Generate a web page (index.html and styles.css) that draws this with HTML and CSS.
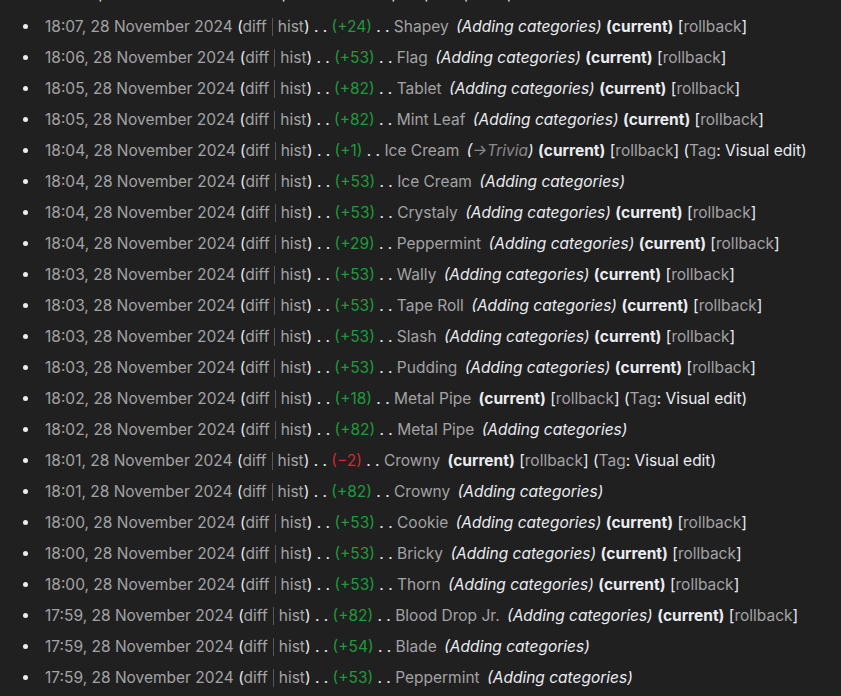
FILE: index.html
```html
<!DOCTYPE html>
<html>
<head>
<meta charset="utf-8">
<link rel="stylesheet" href="styles.css">
</head>
<body>
<div class="page">
<p class="nav">(<a>newest</a> | <a>oldest</a>) View (<a>newer 50</a> | <a>older 50</a>) (<a>20</a> | <a>50</a> | <a>100</a> | <a>250</a> | <a>500</a>)</p>
<ul class="list">
<li><a>18:07, 28 November 2024</a> <span class="lk">(<a>diff</a><span class="bar"></span><a>hist</a>)</span> <span class="sep">. .</span> <span class="pos">(+24)</span> <span class="sep">. .</span> <a class="title">Shapey</a> <i>(Adding categories)</i> <b>(current)</b> <span class="br">[<a>rollback</a>]</span></li>
<li><a>18:06, 28 November 2024</a> <span class="lk">(<a>diff</a><span class="bar"></span><a>hist</a>)</span> <span class="sep">. .</span> <span class="pos">(+53)</span> <span class="sep">. .</span> <a class="title">Flag</a> <i>(Adding categories)</i> <b>(current)</b> <span class="br">[<a>rollback</a>]</span></li>
<li><a>18:05, 28 November 2024</a> <span class="lk">(<a>diff</a><span class="bar"></span><a>hist</a>)</span> <span class="sep">. .</span> <span class="pos">(+82)</span> <span class="sep">. .</span> <a class="title">Tablet</a> <i>(Adding categories)</i> <b>(current)</b> <span class="br">[<a>rollback</a>]</span></li>
<li><a>18:05, 28 November 2024</a> <span class="lk">(<a>diff</a><span class="bar"></span><a>hist</a>)</span> <span class="sep">. .</span> <span class="pos">(+82)</span> <span class="sep">. .</span> <a class="title">Mint Leaf</a> <i>(Adding categories)</i> <b>(current)</b> <span class="br">[<a>rollback</a>]</span></li>
<li><a>18:04, 28 November 2024</a> <span class="lk">(<a>diff</a><span class="bar"></span><a>hist</a>)</span> <span class="sep">. .</span> <span class="pos">(+1)</span> <span class="sep">. .</span> <a class="title">Ice Cream</a> <i>(<a class="sec">→Trivia</a>)</i> <b>(current)</b> <span class="br">[<a>rollback</a>]</span> <span class="tag">(<a>Tag</a>: Visual edit)</span></li>
<li><a>18:04, 28 November 2024</a> <span class="lk">(<a>diff</a><span class="bar"></span><a>hist</a>)</span> <span class="sep">. .</span> <span class="pos">(+53)</span> <span class="sep">. .</span> <a class="title">Ice Cream</a> <i>(Adding categories)</i></li>
<li><a>18:04, 28 November 2024</a> <span class="lk">(<a>diff</a><span class="bar"></span><a>hist</a>)</span> <span class="sep">. .</span> <span class="pos">(+53)</span> <span class="sep">. .</span> <a class="title">Crystaly</a> <i>(Adding categories)</i> <b>(current)</b> <span class="br">[<a>rollback</a>]</span></li>
<li><a>18:04, 28 November 2024</a> <span class="lk">(<a>diff</a><span class="bar"></span><a>hist</a>)</span> <span class="sep">. .</span> <span class="pos">(+29)</span> <span class="sep">. .</span> <a class="title">Peppermint</a> <i>(Adding categories)</i> <b>(current)</b> <span class="br">[<a>rollback</a>]</span></li>
<li><a>18:03, 28 November 2024</a> <span class="lk">(<a>diff</a><span class="bar"></span><a>hist</a>)</span> <span class="sep">. .</span> <span class="pos">(+53)</span> <span class="sep">. .</span> <a class="title">Wally</a> <i>(Adding categories)</i> <b>(current)</b> <span class="br">[<a>rollback</a>]</span></li>
<li><a>18:03, 28 November 2024</a> <span class="lk">(<a>diff</a><span class="bar"></span><a>hist</a>)</span> <span class="sep">. .</span> <span class="pos">(+53)</span> <span class="sep">. .</span> <a class="title">Tape Roll</a> <i>(Adding categories)</i> <b>(current)</b> <span class="br">[<a>rollback</a>]</span></li>
<li><a>18:03, 28 November 2024</a> <span class="lk">(<a>diff</a><span class="bar"></span><a>hist</a>)</span> <span class="sep">. .</span> <span class="pos">(+53)</span> <span class="sep">. .</span> <a class="title">Slash</a> <i>(Adding categories)</i> <b>(current)</b> <span class="br">[<a>rollback</a>]</span></li>
<li><a>18:03, 28 November 2024</a> <span class="lk">(<a>diff</a><span class="bar"></span><a>hist</a>)</span> <span class="sep">. .</span> <span class="pos">(+53)</span> <span class="sep">. .</span> <a class="title">Pudding</a> <i>(Adding categories)</i> <b>(current)</b> <span class="br">[<a>rollback</a>]</span></li>
<li><a>18:02, 28 November 2024</a> <span class="lk">(<a>diff</a><span class="bar"></span><a>hist</a>)</span> <span class="sep">. .</span> <span class="pos">(+18)</span> <span class="sep">. .</span> <a class="title">Metal Pipe</a> <b class="nocom">(current)</b> <span class="br">[<a>rollback</a>]</span> <span class="tag">(<a>Tag</a>: Visual edit)</span></li>
<li><a>18:02, 28 November 2024</a> <span class="lk">(<a>diff</a><span class="bar"></span><a>hist</a>)</span> <span class="sep">. .</span> <span class="pos">(+82)</span> <span class="sep">. .</span> <a class="title">Metal Pipe</a> <i>(Adding categories)</i></li>
<li><a>18:01, 28 November 2024</a> <span class="lk">(<a>diff</a><span class="bar"></span><a>hist</a>)</span> <span class="sep">. .</span> <span class="neg">(−2)</span> <span class="sep">. .</span> <a class="title">Crowny</a> <b class="nocom">(current)</b> <span class="br">[<a>rollback</a>]</span> <span class="tag">(<a>Tag</a>: Visual edit)</span></li>
<li><a>18:01, 28 November 2024</a> <span class="lk">(<a>diff</a><span class="bar"></span><a>hist</a>)</span> <span class="sep">. .</span> <span class="pos">(+82)</span> <span class="sep">. .</span> <a class="title">Crowny</a> <i>(Adding categories)</i></li>
<li><a>18:00, 28 November 2024</a> <span class="lk">(<a>diff</a><span class="bar"></span><a>hist</a>)</span> <span class="sep">. .</span> <span class="pos">(+53)</span> <span class="sep">. .</span> <a class="title">Cookie</a> <i>(Adding categories)</i> <b>(current)</b> <span class="br">[<a>rollback</a>]</span></li>
<li><a>18:00, 28 November 2024</a> <span class="lk">(<a>diff</a><span class="bar"></span><a>hist</a>)</span> <span class="sep">. .</span> <span class="pos">(+53)</span> <span class="sep">. .</span> <a class="title">Bricky</a> <i>(Adding categories)</i> <b>(current)</b> <span class="br">[<a>rollback</a>]</span></li>
<li><a>18:00, 28 November 2024</a> <span class="lk">(<a>diff</a><span class="bar"></span><a>hist</a>)</span> <span class="sep">. .</span> <span class="pos">(+53)</span> <span class="sep">. .</span> <a class="title">Thorn</a> <i>(Adding categories)</i> <b>(current)</b> <span class="br">[<a>rollback</a>]</span></li>
<li><a>17:59, 28 November 2024</a> <span class="lk">(<a>diff</a><span class="bar"></span><a>hist</a>)</span> <span class="sep">. .</span> <span class="pos">(+82)</span> <span class="sep">. .</span> <a class="title">Blood Drop Jr.</a> <i>(Adding categories)</i> <b>(current)</b> <span class="br">[<a>rollback</a>]</span></li>
<li><a>17:59, 28 November 2024</a> <span class="lk">(<a>diff</a><span class="bar"></span><a>hist</a>)</span> <span class="sep">. .</span> <span class="pos">(+54)</span> <span class="sep">. .</span> <a class="title">Blade</a> <i>(Adding categories)</i></li>
<li><a>17:59, 28 November 2024</a> <span class="lk">(<a>diff</a><span class="bar"></span><a>hist</a>)</span> <span class="sep">. .</span> <span class="pos">(+53)</span> <span class="sep">. .</span> <a class="title">Peppermint</a> <i>(Adding categories)</i></li>
</ul>
</div>
</body>
</html>
```

FILE: styles.css
```css
html, body {
  margin: 0;
  padding: 0;
  background: #202021;
  height: 100%;
  overflow: hidden;
}
.page {
  font-family: Inter, "Noto Sans", sans-serif;
  font-size: 15.5px;
  color: #eaecf0;
  margin-top: -16px;
  padding-left: 45px;
}
a {
  color: #a3a3a3;
}
.nav {
  margin: 0 0 0 -10px;
  line-height: 18px;
  color: #eaecf0;
}
.list {
  list-style: none;
  margin: 9px 0 0 0;
  padding: 0;
}
.list li {
  line-height: 31px;
  white-space: nowrap;
}
.list li::before {
  content: "";
  display: inline-block;
  width: 5px;
  height: 5px;
  border-radius: 50%;
  background: #eaecf0;
  margin-left: -22px;
  margin-right: 17px;
  vertical-align: 3px;
}
.bar {
  display: inline-block;
  width: 1px;
  height: 18px;
  background: #55575a;
  margin: 0 5px;
  vertical-align: -4px;
}
.pos { color: #1f9a3a; }
.neg { color: #d3262f; }
.title { margin-right: 3px; }
i { font-style: italic; }
b { font-weight: 700; }
.sec { color: #8a8a8a; }
```
